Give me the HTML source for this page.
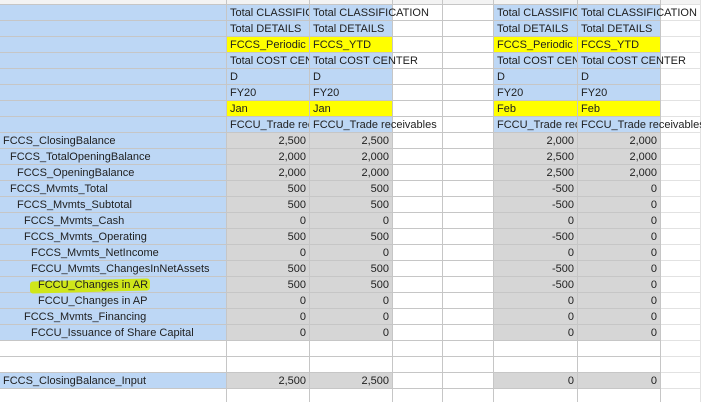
<!DOCTYPE html>
<html><head><meta charset="utf-8"><style>
html,body{margin:0;padding:0;width:701px;height:402px;overflow:hidden;background:#fff;}
#g{position:relative;width:701px;height:402px;font-family:"Liberation Sans",sans-serif;font-size:11px;color:#1e1e1e;}
.c{position:absolute;box-sizing:border-box;border-right:1px solid #c6c6c6;border-bottom:1px solid #c6c6c6;line-height:15px;white-space:nowrap;}
.t{position:absolute;white-space:nowrap;line-height:17px;font-family:"Liberation Sans",sans-serif;font-size:11px;color:#1e1e1e;}
.hl{position:absolute;left:30px;top:280px;width:120px;height:12px;background:#cfe61a;transform:skewY(-1.5deg);border-radius:3px;}
</style></head><body><div id="g"></div>
<script>
var X=[0,227,310,393,443,494,578,661,701];
var B="#bdd7f5",G="#d6d6d6",Y="#ffff00",W="#fff";
var g=document.getElementById('g');var h='';
function y(r){return r==0?0:5+(r-1)*16;}
function ht(r){return r==0?5:16;}
var bg=[];for(var r=0;r<26;r++){bg[r]=[W,W,W,W,W,W,W,W];}
bg[0]=["#f3f3f3","#f3f3f3","#f3f3f3","#f3f3f3","#f3f3f3","#f3f3f3","#f3f3f3","#f3f3f3"];
for(r=1;r<=8;r++){var c=(r==3||r==7)?Y:B;bg[r][0]=B;bg[r][1]=c;bg[r][2]=c;bg[r][5]=c;bg[r][6]=c;}
for(r=9;r<=21;r++){bg[r][0]=B;bg[r][1]=G;bg[r][2]=G;bg[r][5]=G;bg[r][6]=G;}
r=24;bg[r][0]=B;bg[r][1]=G;bg[r][2]=G;bg[r][5]=G;bg[r][6]=G;
for(r=0;r<26;r++)for(var k=0;k<8;k++){
 var bc=k==7?"#e2e2e2":"#c6c6c6";
 h+='<div class="c" style="left:'+X[k]+'px;top:'+y(r)+'px;width:'+(X[k+1]-X[k])+'px;height:'+ht(r)+'px;background:'+bg[r][k]+';border-color:'+bc+'"></div>';}
h+='<div class="hl"></div>';
function txt(r,k,s,al,ind,clip){
 var st='top:'+y(r)+'px;';
 if(al=='r'){st+='left:'+X[k]+'px;width:'+(X[k+1]-X[k]-4)+'px;text-align:right;';}
 else{st+='left:'+(X[k]+3+(ind||0))+'px;';if(clip)st+='width:'+(X[k+1]-X[k]-4)+'px;overflow:hidden;';}
 h+='<div class="t" style="'+st+'">'+s+'</div>';}
var hd=[["Total CLASSIFICATION","Total CLASSIFICATION"],["Total DETAILS","Total DETAILS"],["FCCS_Periodic","FCCS_YTD"],["Total COST CENTER","Total COST CENTER"],["D","D"],["FY20","FY20"],["Jan","Jan"],["FCCU_Trade receivables","FCCU_Trade receivables"]];
for(var i=0;i<8;i++){txt(i+1,1,hd[i][0],'l',0,true);txt(i+1,2,hd[i][1],'l',0,false);
 var f0=hd[i][0],f1=hd[i][1];if(i==6){f0="Feb";f1="Feb";}
 txt(i+1,5,f0,'l',0,true);txt(i+1,6,f1,'l',0,false);}
var rows=[["FCCS_ClosingBalance",0,"2,500","2,500","2,000","2,000"],["FCCS_TotalOpeningBalance",7,"2,000","2,000","2,500","2,000"],["FCCS_OpeningBalance",14,"2,000","2,000","2,500","2,000"],["FCCS_Mvmts_Total",7,"500","500","-500","0"],["FCCS_Mvmts_Subtotal",14,"500","500","-500","0"],["FCCS_Mvmts_Cash",21,"0","0","0","0"],["FCCS_Mvmts_Operating",21,"500","500","-500","0"],["FCCS_Mvmts_NetIncome",28,"0","0","0","0"],["FCCU_Mvmts_ChangesInNetAssets",28,"500","500","-500","0"],["FCCU_Changes in AR",35,"500","500","-500","0"],["FCCU_Changes in AP",35,"0","0","0","0"],["FCCS_Mvmts_Financing",21,"0","0","0","0"],["FCCU_Issuance of Share Capital",28,"0","0","0","0"]];
for(i=0;i<rows.length;i++){var q=rows[i],rr=i+9;txt(rr,0,q[0],'l',q[1]);txt(rr,1,q[2],'r');txt(rr,2,q[3],'r');txt(rr,5,q[4],'r');txt(rr,6,q[5],'r');}
txt(24,0,"FCCS_ClosingBalance_Input",'l',0);txt(24,1,"2,500",'r');txt(24,2,"2,500",'r');txt(24,5,"0",'r');txt(24,6,"0",'r');
g.innerHTML=h;
</script></body></html>
